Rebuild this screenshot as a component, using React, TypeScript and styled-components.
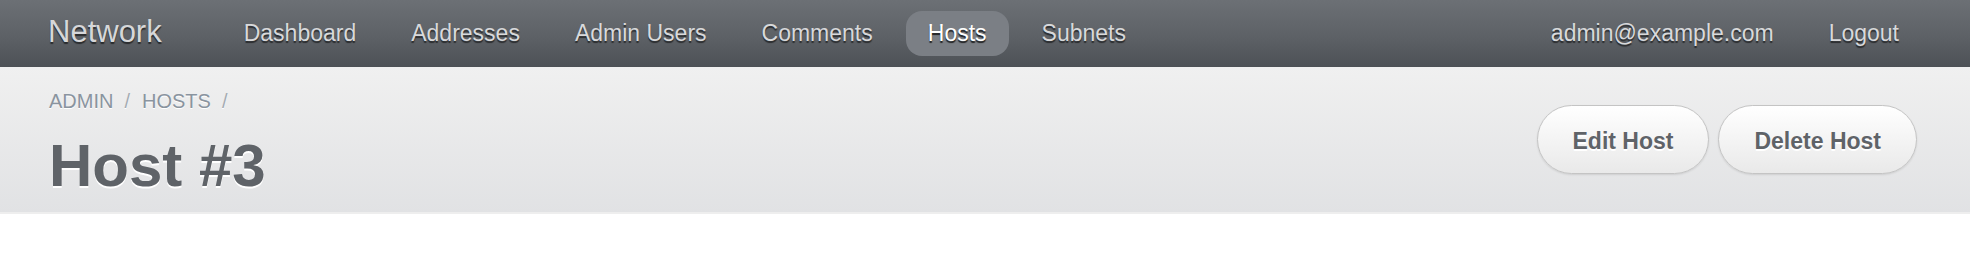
import React from "react";
import styled, { createGlobalStyle } from "styled-components";

const Global = createGlobalStyle`
  html, body { margin: 0; padding: 0; background: #ffffff; }
  body { font-family: "Liberation Sans", Arial, Helvetica, sans-serif; }
  * { box-sizing: border-box; }
`;

const NavBar = styled.nav`
  height: 67px;
  display: flex;
  align-items: center;
  padding: 0 49px 0 48px;
  background: linear-gradient(to bottom, #6c7075 0%, #5d6166 55%, #4d5156 100%);
`;

const Brand = styled.a`
  font-size: 31px;
  color: #d6d7d9;
  text-shadow: 0 2px 1px rgba(0, 0, 0, 0.55);
  margin-right: 60px;
  text-decoration: none;
  white-space: nowrap;
  margin-top: -3px;
`;

const NavList = styled.div`
  display: flex;
  align-items: center;
  gap: 11px;
`;

const Spacer = styled.div`
  flex: 1;
`;

const NavLink = styled.a<{ $active?: boolean }>`
  display: flex;
  align-items: center;
  height: 45px;
  padding: 0 22px;
  border-radius: 16px;
  font-size: 23px;
  white-space: nowrap;
  text-decoration: none;
  color: ${(p) => (p.$active ? "#ffffff" : "#d8d9db")};
  background: ${(p) => (p.$active ? "#7b7f85" : "transparent")};
  text-shadow: ${(p) =>
    p.$active ? "0 2px 1px rgba(0,0,0,0.75)" : "0 2px 1px rgba(0,0,0,0.55)"};
`;

const Header = styled.header`
  height: 147px;
  display: flex;
  align-items: center;
  justify-content: space-between;
  padding: 0 53px 0 49px;
  background: linear-gradient(to bottom, #f0f0f0 0%, #e1e2e4 100%);
  border-bottom: 2px solid #eeeeee;
  box-shadow: 0 2px 0 #b8b8b8, 0 4px 5px rgba(0, 0, 0, 0.1);
  position: relative;
`;

const TitleBlock = styled.div`
  display: flex;
  flex-direction: column;
  gap: 20px;
  margin-top: 9px;
`;

const Breadcrumbs = styled.div`
  display: flex;
  align-items: center;
  font-size: 20px;
  line-height: 23px;
  color: #8a949f;
  text-shadow: 0 1px 0 #ffffff;
`;

const Crumb = styled.a`
  color: #8a949f;
  text-decoration: none;
`;

const Sep = styled.span`
  color: #a4abb2;
  margin: 0 12px 0 11px;
`;

const Title = styled.h1`
  margin: 0;
  font-size: 60px;
  line-height: 66px;
  font-weight: 700;
  color: #5f6368;
  text-shadow: 0 2px 0 #ffffff;
`;

const Actions = styled.div`
  display: flex;
  gap: 9px;
`;

const Button = styled.button`
  height: 69px;
  padding: 4px 35px 0;
  border-radius: 35px;
  border: 1px solid #c4c4c4;
  background: linear-gradient(to bottom, #ffffff 0%, #f4f4f4 50%, #e9e9e9 100%);
  box-shadow: 0 1px 2px rgba(0, 0, 0, 0.1);
  font-family: "Liberation Sans", Arial, Helvetica, sans-serif;
  font-size: 23px;
  font-weight: 700;
  color: #5f6368;
  text-shadow: 0 2px 0 #ffffff;
  cursor: pointer;
`;

export default function App() {
  const links = ["Dashboard", "Addresses", "Admin Users", "Comments", "Hosts", "Subnets"];
  return (
    <>
      <Global />
      <NavBar>
        <Brand href="#">Network</Brand>
        <NavList>
          {links.map((l) => (
            <NavLink key={l} href="#" $active={l === "Hosts"}>
              {l}
            </NavLink>
          ))}
        </NavList>
        <Spacer />
        <NavList>
          <NavLink href="#">admin@example.com</NavLink>
          <NavLink href="#">Logout</NavLink>
        </NavList>
      </NavBar>
      <Header>
        <TitleBlock>
          <Breadcrumbs>
            <Crumb href="#">ADMIN</Crumb>
            <Sep>/</Sep>
            <Crumb href="#">HOSTS</Crumb>
            <Sep>/</Sep>
          </Breadcrumbs>
          <Title>Host #3</Title>
        </TitleBlock>
        <Actions>
          <Button>Edit Host</Button>
          <Button>Delete Host</Button>
        </Actions>
      </Header>
    </>
  );
}
